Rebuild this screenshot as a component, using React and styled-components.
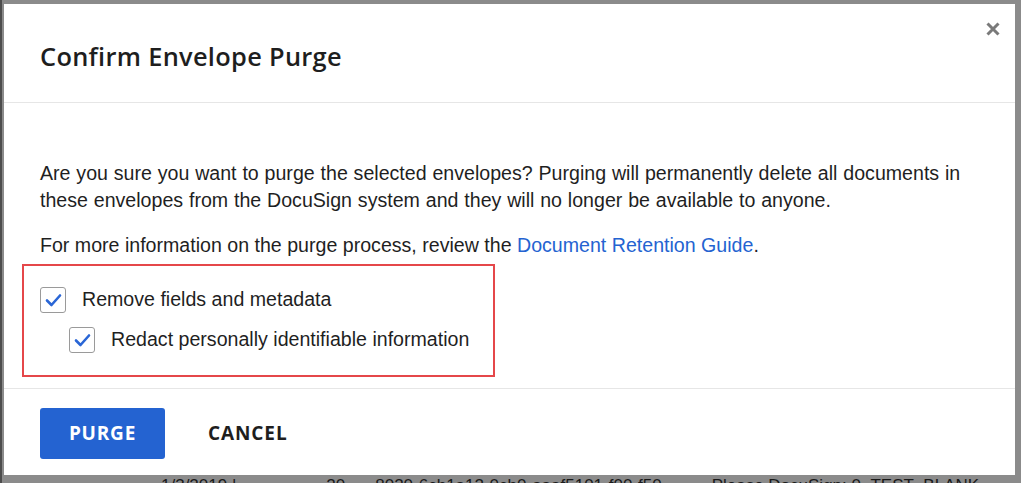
import React from 'react'
import styled, {createGlobalStyle} from 'styled-components'

const GlobalStyle = createGlobalStyle`
  html, body {
    margin: 0;
    padding: 0;
    background: #8b8b8b;
    overflow: hidden;
  }
  * {
    box-sizing: border-box;
  }
`

const Screen = styled.div`
  width: 1021px;
  height: 483px;
  border-left: 2px solid #4d4d4d;
  padding: 4px 6px 0 2px;
  display: flex;
  flex-direction: column;
  overflow: hidden;
`

const Dialog = styled.div`
  background: #ffffff;
  height: 471px;
  display: flex;
  flex-direction: column;
  flex-shrink: 0;
`

const Header = styled.div`
  height: 99px;
  flex-shrink: 0;
  display: flex;
  align-items: center;
  justify-content: space-between;
  padding: 0 12px 0 36px;
  border-bottom: 1px solid #e6e6e6;
`

const Title = styled.h1`
  margin: 6px 0 0;
  font-family: "Open Sans", "Noto Sans", sans-serif;
  font-size: 25.4px;
  font-weight: 600;
  letter-spacing: 0.3px;
  color: #1e1e1e;
`

const CloseButton = styled.button`
  align-self: flex-start;
  margin-top: 15px;
  width: 20px;
  height: 20px;
  padding: 0;
  border: none;
  background: transparent;
  display: flex;
  align-items: center;
  justify-content: center;
`

const Body = styled.div`
  flex: 1;
  padding: 57px 36px 0;
  font-family: "Liberation Sans", Arial, sans-serif;
  font-size: 19.6px;
  line-height: 27px;
  color: #1f1f1f;
  position: relative;
`

const Paragraph = styled.p`
  margin: 0 0 ${props => props.gap || 0}px;
  max-width: 930px;
  word-spacing: ${props => props.spread || 0}px;
`

const Link = styled.a`
  color: #2463d1;
  text-decoration: none;
`

const Highlight = styled.div`
  position: absolute;
  left: 18px;
  top: 161px;
  width: 473px;
  height: 113px;
  border: 2px solid #e5474a;
  pointer-events: none;
`

const Options = styled.div`
  display: flex;
  flex-direction: column;
  gap: 13px;
  padding-top: 27px;
`

const OptionRow = styled.label`
  display: flex;
  align-items: center;
  gap: 16px;
  padding-left: ${props => props.indent || 0}px;
`

const Box = styled.span`
  width: 26px;
  height: 26px;
  border: 1px solid #9a9a9a;
  border-radius: 3px;
  display: flex;
  align-items: center;
  justify-content: center;
  flex-shrink: 0;
`

const Footer = styled.div`
  height: 87px;
  flex-shrink: 0;
  border-top: 1px solid #e6e6e6;
  display: flex;
  align-items: center;
  padding: 0 36px 0;
`

const PrimaryButton = styled.button`
  width: 125px;
  height: 51px;
  margin-top: 2px;
  border: none;
  border-radius: 3px;
  background: #2463d1;
  color: #ffffff;
  font-family: "Open Sans", "Noto Sans", sans-serif;
  font-size: 19px;
  font-weight: 700;
  letter-spacing: 0.8px;
`

const TextButton = styled.button`
  margin: 2px 0 0 43px;
  padding: 0;
  border: none;
  background: transparent;
  color: #1e1e1e;
  font-family: "Open Sans", "Noto Sans", sans-serif;
  font-size: 19px;
  font-weight: 700;
  letter-spacing: 0.9px;
`

const BehindRow = styled.div`
  display: flex;
  height: 8px;
  overflow: hidden;
  padding-top: 1px;
  font-family: "Liberation Sans", Arial, sans-serif;
  font-size: 17px;
  line-height: 20px;
  color: #1a1a1a;
  white-space: nowrap;
`

const BehindCell = styled.span`
  padding-left: ${props => props.left}px;
`

const Check = () => (
  <svg width="17" height="14" viewBox="0 0 17 14">
    <polyline points="2,7.5 6.5,12 15,2.5" fill="none" stroke="#2a66d6" strokeWidth="2.6"
      strokeLinecap="round" strokeLinejoin="round"/>
  </svg>
)

const Checkbox = ({indent, children}) => (
  <OptionRow indent={indent}>
    <Box><Check/></Box>
    <span>{children}</span>
  </OptionRow>
)

export default function App() {
  return (
    <>
      <GlobalStyle/>
      <Screen>
        <Dialog>
          <Header>
            <Title>Confirm Envelope Purge</Title>
            <CloseButton aria-label="Close">
              <svg width="14" height="14" viewBox="0 0 14 14">
                <path d="M1.5 1.5 L12.5 12.5 M12.5 1.5 L1.5 12.5" stroke="#7a7a7a" strokeWidth="3" strokeLinecap="butt"/>
              </svg>
            </CloseButton>
          </Header>
          <Body>
            <Paragraph gap={18} spread={0.4}>
              Are you sure you want to purge the selected envelopes? Purging will permanently delete all documents in
              these envelopes from the DocuSign system and they will no longer be available to anyone.
            </Paragraph>
            <Paragraph>
              For more information on the purge process, review the <Link href="#">Document Retention Guide</Link>.
            </Paragraph>
            <Options>
              <Checkbox>Remove fields and metadata</Checkbox>
              <Checkbox indent={29}>Redact personally identifiable information</Checkbox>
            </Options>
            <Highlight/>
          </Body>
          <Footer>
            <PrimaryButton>PURGE</PrimaryButton>
            <TextButton>CANCEL</TextButton>
          </Footer>
        </Dialog>
        <BehindRow>
          <BehindCell left={157}>1/3/2019 |</BehindCell>
          <BehindCell left={90}>20</BehindCell>
          <BehindCell left={30}>8020-6cb1a12-0cb0-aaaf5101-f00-f50</BehindCell>
          <BehindCell left={50}>Please DocuSign: 0_TEST_BLANK</BehindCell>
        </BehindRow>
      </Screen>
    </>
  )
}
